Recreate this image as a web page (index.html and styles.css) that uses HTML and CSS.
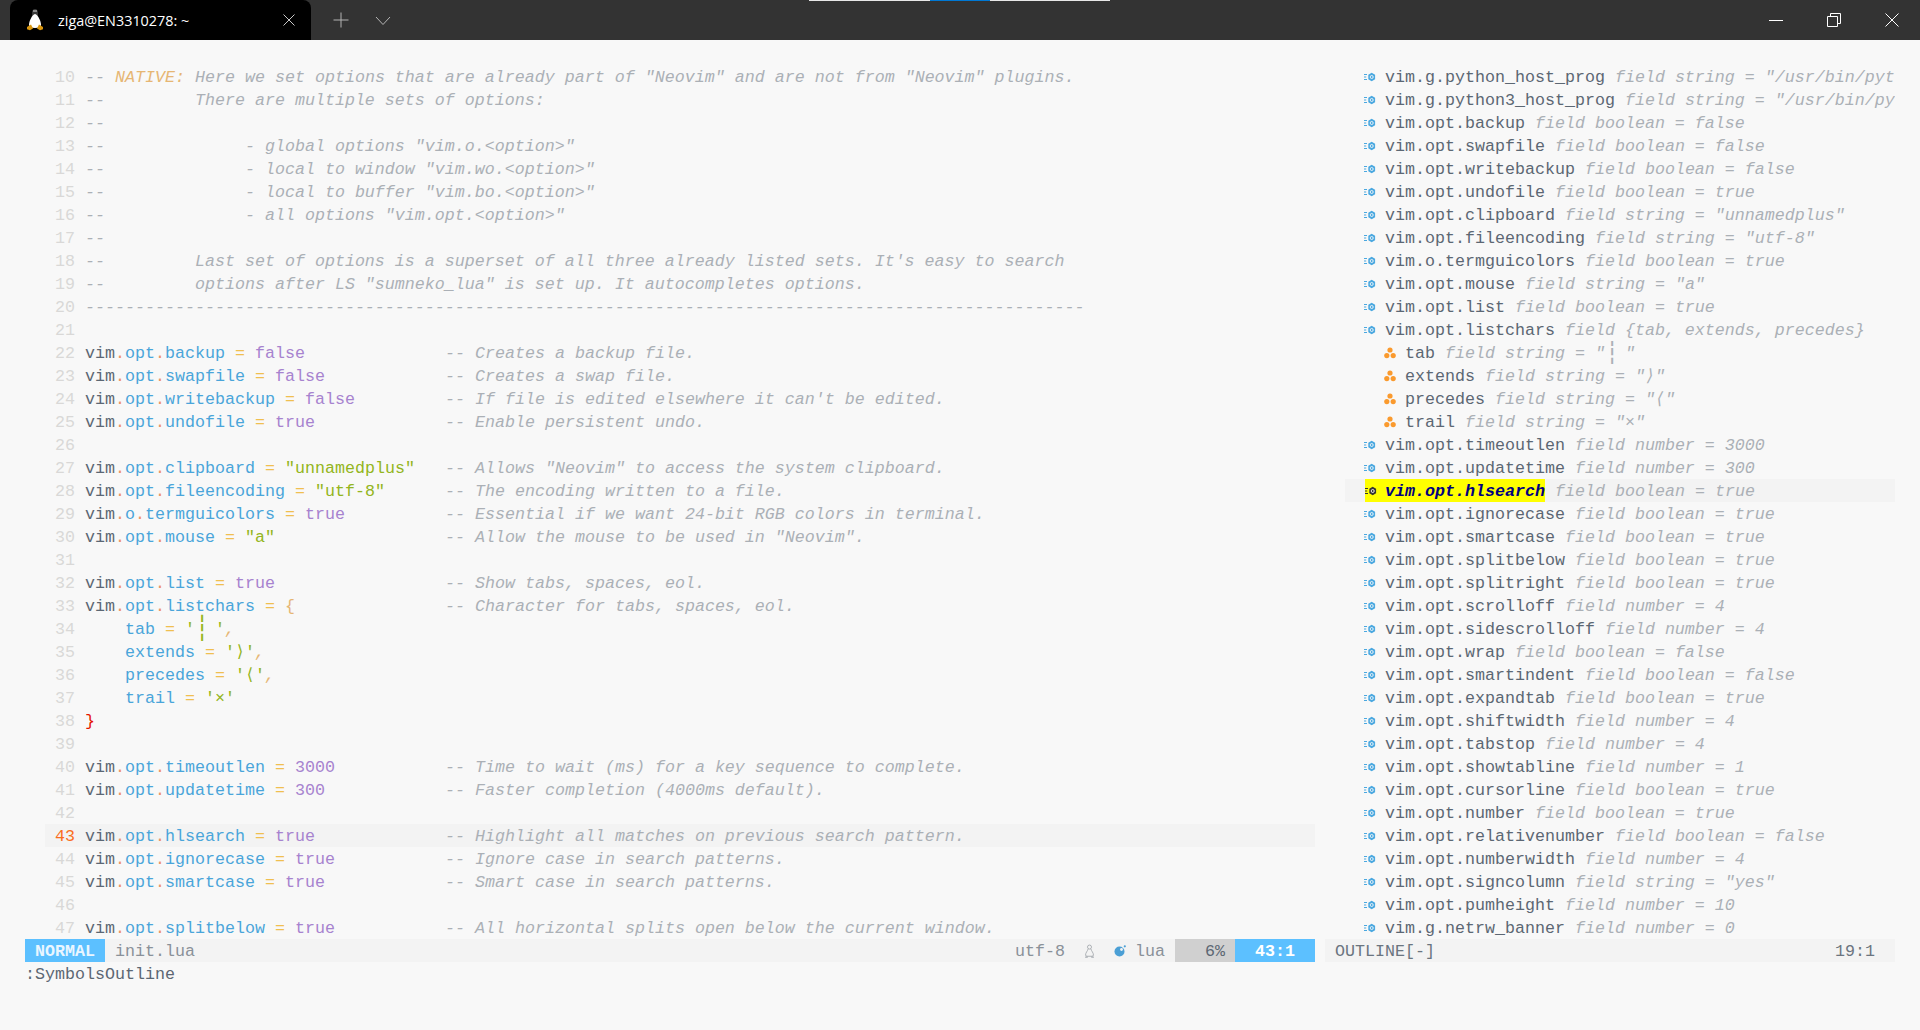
FILE: index.html
```html
<!DOCTYPE html>
<html lang="en">
<head>
<meta charset="utf-8">
<title>ziga@EN3310278: ~</title>
<link rel="stylesheet" href="styles.css">
</head>
<body>
<svg class="defs" aria-hidden="true">
  <symbol id="fld" viewBox="0 0 12 10">
    <path d="M0 2.500h3M0 5h2.200M0 7.500h3" stroke="currentColor" stroke-width="1" fill="none"/>
    <path d="M7.700 .8l3.400 2v4.400l-3.400 2-3.400-2V2.800z" fill="currentColor"/>
    <circle cx="7.700" cy="5" r="1.500" fill="none" stroke="#f8f8f8" stroke-width=".9"/>
  </symbol>
  <symbol id="mem" viewBox="0 0 12 12">
    <circle cx="6" cy="3" r="2.600" fill="#fa9a2e"/>
    <circle cx="2.800" cy="8.600" r="2.600" fill="#fa9a2e"/>
    <circle cx="9.200" cy="8.600" r="2.600" fill="#fa9a2e"/>
  </symbol>
</svg>
<div class="strip"><span class="strip-blue"></span></div>
<header class="titlebar">
  <div class="tab">
    <svg class="tux" viewBox="0 0 20 24" width="20" height="24">
      <ellipse cx="10" cy="5.500" rx="3" ry="4.500" fill="#3a3a3a"/>
      <circle cx="9" cy="3" r=".8" fill="#eee"/>
      <circle cx="11" cy="3" r=".8" fill="#eee"/>
      <path d="M10 6c-3 1-6 7-6 11 0 2 2 3 6 3s6-1 6-3c0-4-3-10-6-11z" fill="#fff"/>
      <path d="M2 19l4-2.500 2 4-3 1.800-3-1zM18 19l-4-2.500-2 4 3 1.800 3-1z" fill="#d9960f"/>
    </svg>
    <span class="tab-title">ziga@EN3310278: ~</span>
    <svg class="tab-x" viewBox="0 0 12 12" width="12" height="12"><path d="M.5.5l11 11M11.500.5l-11 11" stroke="#c8c8c8" fill="none"/></svg>
  </div>
  <svg class="new-tab" viewBox="0 0 16 16" width="16" height="16"><path d="M8 .5v15M.5 8h15" stroke="#b4b4b4" fill="none"/></svg>
  <svg class="tab-menu" viewBox="0 0 16 10" width="16" height="10"><path d="M1 1l7 7.500L15 1" stroke="#b4b4b4" fill="none"/></svg>
  <div class="win-btns">
    <svg viewBox="0 0 14 14" width="14" height="14"><path d="M0 7.500h14" stroke="#fff" fill="none"/></svg>
    <svg viewBox="0 0 14 14" width="14" height="14"><path d="M.5 3.500h10v10H.5zM3.500 3.500V.5h10v10h-3" stroke="#fff" fill="none"/></svg>
    <svg viewBox="0 0 14 14" width="14" height="14"><path d="M.5.5l13 13M13.500.5l-13 13" stroke="#fff" fill="none"/></svg>
  </div>
</header>
<main class="editor">
  <section class="win win-left">
    <div class="lines">
      <div class="line"><span class="num">10</span><span class="c">-- </span><span class="todo">NATIVE:</span><span class="c"> Here we set options that are already part of "Neovim" and are not from "Neovim" plugins.</span></div>
      <div class="line"><span class="num">11</span><span class="c">--         There are multiple sets of options:</span></div>
      <div class="line"><span class="num">12</span><span class="c">--</span></div>
      <div class="line"><span class="num">13</span><span class="c">--              - global options "vim.o.&lt;option&gt;"</span></div>
      <div class="line"><span class="num">14</span><span class="c">--              - local to window "vim.wo.&lt;option&gt;"</span></div>
      <div class="line"><span class="num">15</span><span class="c">--              - local to buffer "vim.bo.&lt;option&gt;"</span></div>
      <div class="line"><span class="num">16</span><span class="c">--              - all options "vim.opt.&lt;option&gt;"</span></div>
      <div class="line"><span class="num">17</span><span class="c">--</span></div>
      <div class="line"><span class="num">18</span><span class="c">--         Last set of options is a superset of all three already listed sets. It's easy to search</span></div>
      <div class="line"><span class="num">19</span><span class="c">--         options after LS "sumneko_lua" is set up. It autocompletes options.</span></div>
      <div class="line"><span class="num">20</span><span class="c">----------------------------------------------------------------------------------------------------</span></div>
      <div class="line"><span class="num">21</span></div>
      <div class="line"><span class="num">22</span><span class="code">vim<i>.</i><b>opt</b><i>.</i><b>backup</b> <u>=</u> <em>false</em></span><span class="c">-- Creates a backup file.</span></div>
      <div class="line"><span class="num">23</span><span class="code">vim<i>.</i><b>opt</b><i>.</i><b>swapfile</b> <u>=</u> <em>false</em></span><span class="c">-- Creates a swap file.</span></div>
      <div class="line"><span class="num">24</span><span class="code">vim<i>.</i><b>opt</b><i>.</i><b>writebackup</b> <u>=</u> <em>false</em></span><span class="c">-- If file is edited elsewhere it can't be edited.</span></div>
      <div class="line"><span class="num">25</span><span class="code">vim<i>.</i><b>opt</b><i>.</i><b>undofile</b> <u>=</u> <em>true</em></span><span class="c">-- Enable persistent undo.</span></div>
      <div class="line"><span class="num">26</span></div>
      <div class="line"><span class="num">27</span><span class="code">vim<i>.</i><b>opt</b><i>.</i><b>clipboard</b> <u>=</u> <s>"unnamedplus"</s></span><span class="c">-- Allows "Neovim" to access the system clipboard.</span></div>
      <div class="line"><span class="num">28</span><span class="code">vim<i>.</i><b>opt</b><i>.</i><b>fileencoding</b> <u>=</u> <s>"utf-8"</s></span><span class="c">-- The encoding written to a file.</span></div>
      <div class="line"><span class="num">29</span><span class="code">vim<i>.</i><b>o</b><i>.</i><b>termguicolors</b> <u>=</u> <em>true</em></span><span class="c">-- Essential if we want 24-bit RGB colors in terminal.</span></div>
      <div class="line"><span class="num">30</span><span class="code">vim<i>.</i><b>opt</b><i>.</i><b>mouse</b> <u>=</u> <s>"a"</s></span><span class="c">-- Allow the mouse to be used in "Neovim".</span></div>
      <div class="line"><span class="num">31</span></div>
      <div class="line"><span class="num">32</span><span class="code">vim<i>.</i><b>opt</b><i>.</i><b>list</b> <u>=</u> <em>true</em></span><span class="c">-- Show tabs, spaces, eol.</span></div>
      <div class="line"><span class="num">33</span><span class="code">vim<i>.</i><b>opt</b><i>.</i><b>listchars</b> <u>=</u> <i class="brace">{</i></span><span class="c">-- Character for tabs, spaces, eol.</span></div>
      <div class="line"><span class="num">34</span><span class="code">    <b>tab</b> <u>=</u> <s>'<span class="tabdash">┆</span> '</s><i class="comma">,</i></span></div>
      <div class="line"><span class="num">35</span><span class="code">    <b>extends</b> <u>=</u> <s>'⟩'</s><i class="comma">,</i></span></div>
      <div class="line"><span class="num">36</span><span class="code">    <b>precedes</b> <u>=</u> <s>'⟨'</s><i class="comma">,</i></span></div>
      <div class="line"><span class="num">37</span><span class="code">    <b>trail</b> <u>=</u> <s>'×'</s></span></div>
      <div class="line"><span class="num">38</span><span class="code"><i class="brace-end">}</i></span></div>
      <div class="line"><span class="num">39</span></div>
      <div class="line"><span class="num">40</span><span class="code">vim<i>.</i><b>opt</b><i>.</i><b>timeoutlen</b> <u>=</u> <em>3000</em></span><span class="c">-- Time to wait (ms) for a key sequence to complete.</span></div>
      <div class="line"><span class="num">41</span><span class="code">vim<i>.</i><b>opt</b><i>.</i><b>updatetime</b> <u>=</u> <em>300</em></span><span class="c">-- Faster completion (4000ms default).</span></div>
      <div class="line"><span class="num">42</span></div>
      <div class="line cursor"><span class="num cur-num">43</span><span class="code">vim<i>.</i><b>opt</b><i>.</i><b>hlsearch</b> <u>=</u> <em>true</em></span><span class="c">-- Highlight all matches on previous search pattern.</span></div>
      <div class="line"><span class="num">44</span><span class="code">vim<i>.</i><b>opt</b><i>.</i><b>ignorecase</b> <u>=</u> <em>true</em></span><span class="c">-- Ignore case in search patterns.</span></div>
      <div class="line"><span class="num">45</span><span class="code">vim<i>.</i><b>opt</b><i>.</i><b>smartcase</b> <u>=</u> <em>true</em></span><span class="c">-- Smart case in search patterns.</span></div>
      <div class="line"><span class="num">46</span></div>
      <div class="line"><span class="num">47</span><span class="code">vim<i>.</i><b>opt</b><i>.</i><b>splitbelow</b> <u>=</u> <em>true</em></span><span class="c">-- All horizontal splits open below the current window.</span></div>
    </div>
    <div class="status">
      <span class="mode">NORMAL</span>
      <span class="fname">init.lua</span>
      <span class="enc">utf-8</span>
      <svg class="st-tux" viewBox="0 0 12 16" width="11" height="14"><circle cx="6" cy="3.500" r="2.300" fill="none" stroke="#a4a8ad"/><path d="M4.500 5.500C3.800 8 1.500 10 1.500 12.500c0 1 .7 1.500 1.500 1.500h6c.8 0 1.500-.5 1.500-1.500C10.500 10 8.200 8 7.500 5.500" fill="none" stroke="#a4a8ad"/><path d="M1 15h3M8 15h3" stroke="#8a9199"/></svg>
      <svg class="st-lua" viewBox="0 0 12 12" width="12" height="12"><circle cx="5.500" cy="6.500" r="5" fill="#4b9fd5"/><circle cx="7.500" cy="4.500" r="1.400" fill="#f3f3f3"/><circle cx="10.800" cy="1.300" r="1.100" fill="#4b9fd5"/></svg>
      <span class="ft">lua</span>
      <span class="pct">6%</span>
      <span class="pos">43:1</span>
    </div>
  </section>
  <section class="win win-right">
    <div class="lines">
      <div class="oline"><svg class="ic"><use href="#fld"/></svg><span class="nm">vim.g.python_host_prog</span><span class="c">field string = "/usr/bin/pyt</span></div>
      <div class="oline"><svg class="ic"><use href="#fld"/></svg><span class="nm">vim.g.python3_host_prog</span><span class="c">field string = "/usr/bin/py</span></div>
      <div class="oline"><svg class="ic"><use href="#fld"/></svg><span class="nm">vim.opt.backup</span><span class="c">field boolean = false</span></div>
      <div class="oline"><svg class="ic"><use href="#fld"/></svg><span class="nm">vim.opt.swapfile</span><span class="c">field boolean = false</span></div>
      <div class="oline"><svg class="ic"><use href="#fld"/></svg><span class="nm">vim.opt.writebackup</span><span class="c">field boolean = false</span></div>
      <div class="oline"><svg class="ic"><use href="#fld"/></svg><span class="nm">vim.opt.undofile</span><span class="c">field boolean = true</span></div>
      <div class="oline"><svg class="ic"><use href="#fld"/></svg><span class="nm">vim.opt.clipboard</span><span class="c">field string = "unnamedplus"</span></div>
      <div class="oline"><svg class="ic"><use href="#fld"/></svg><span class="nm">vim.opt.fileencoding</span><span class="c">field string = "utf-8"</span></div>
      <div class="oline"><svg class="ic"><use href="#fld"/></svg><span class="nm">vim.o.termguicolors</span><span class="c">field boolean = true</span></div>
      <div class="oline"><svg class="ic"><use href="#fld"/></svg><span class="nm">vim.opt.mouse</span><span class="c">field string = "a"</span></div>
      <div class="oline"><svg class="ic"><use href="#fld"/></svg><span class="nm">vim.opt.list</span><span class="c">field boolean = true</span></div>
      <div class="oline"><svg class="ic"><use href="#fld"/></svg><span class="nm">vim.opt.listchars</span><span class="c">field {tab, extends, precedes}</span></div>
      <div class="oline child"><svg class="ic2"><use href="#mem"/></svg><span class="nm">tab</span><span class="c">field string = "<span class="tabdash-o">┆</span> "</span></div>
      <div class="oline child"><svg class="ic2"><use href="#mem"/></svg><span class="nm">extends</span><span class="c">field string = "⟩"</span></div>
      <div class="oline child"><svg class="ic2"><use href="#mem"/></svg><span class="nm">precedes</span><span class="c">field string = "⟨"</span></div>
      <div class="oline child"><svg class="ic2"><use href="#mem"/></svg><span class="nm">trail</span><span class="c">field string = "×"</span></div>
      <div class="oline"><svg class="ic"><use href="#fld"/></svg><span class="nm">vim.opt.timeoutlen</span><span class="c">field number = 3000</span></div>
      <div class="oline"><svg class="ic"><use href="#fld"/></svg><span class="nm">vim.opt.updatetime</span><span class="c">field number = 300</span></div>
      <div class="oline ocur"><span class="hit"><svg class="ic ic-hit"><use href="#fld"/></svg><span class="nm-hit">vim.opt.hlsearch</span></span><span class="c">field boolean = true</span></div>
      <div class="oline"><svg class="ic"><use href="#fld"/></svg><span class="nm">vim.opt.ignorecase</span><span class="c">field boolean = true</span></div>
      <div class="oline"><svg class="ic"><use href="#fld"/></svg><span class="nm">vim.opt.smartcase</span><span class="c">field boolean = true</span></div>
      <div class="oline"><svg class="ic"><use href="#fld"/></svg><span class="nm">vim.opt.splitbelow</span><span class="c">field boolean = true</span></div>
      <div class="oline"><svg class="ic"><use href="#fld"/></svg><span class="nm">vim.opt.splitright</span><span class="c">field boolean = true</span></div>
      <div class="oline"><svg class="ic"><use href="#fld"/></svg><span class="nm">vim.opt.scrolloff</span><span class="c">field number = 4</span></div>
      <div class="oline"><svg class="ic"><use href="#fld"/></svg><span class="nm">vim.opt.sidescrolloff</span><span class="c">field number = 4</span></div>
      <div class="oline"><svg class="ic"><use href="#fld"/></svg><span class="nm">vim.opt.wrap</span><span class="c">field boolean = false</span></div>
      <div class="oline"><svg class="ic"><use href="#fld"/></svg><span class="nm">vim.opt.smartindent</span><span class="c">field boolean = false</span></div>
      <div class="oline"><svg class="ic"><use href="#fld"/></svg><span class="nm">vim.opt.expandtab</span><span class="c">field boolean = true</span></div>
      <div class="oline"><svg class="ic"><use href="#fld"/></svg><span class="nm">vim.opt.shiftwidth</span><span class="c">field number = 4</span></div>
      <div class="oline"><svg class="ic"><use href="#fld"/></svg><span class="nm">vim.opt.tabstop</span><span class="c">field number = 4</span></div>
      <div class="oline"><svg class="ic"><use href="#fld"/></svg><span class="nm">vim.opt.showtabline</span><span class="c">field number = 1</span></div>
      <div class="oline"><svg class="ic"><use href="#fld"/></svg><span class="nm">vim.opt.cursorline</span><span class="c">field boolean = true</span></div>
      <div class="oline"><svg class="ic"><use href="#fld"/></svg><span class="nm">vim.opt.number</span><span class="c">field boolean = true</span></div>
      <div class="oline"><svg class="ic"><use href="#fld"/></svg><span class="nm">vim.opt.relativenumber</span><span class="c">field boolean = false</span></div>
      <div class="oline"><svg class="ic"><use href="#fld"/></svg><span class="nm">vim.opt.numberwidth</span><span class="c">field number = 4</span></div>
      <div class="oline"><svg class="ic"><use href="#fld"/></svg><span class="nm">vim.opt.signcolumn</span><span class="c">field string = "yes"</span></div>
      <div class="oline"><svg class="ic"><use href="#fld"/></svg><span class="nm">vim.opt.pumheight</span><span class="c">field number = 10</span></div>
      <div class="oline"><svg class="ic"><use href="#fld"/></svg><span class="nm">vim.g.netrw_banner</span><span class="c">field number = 0</span></div>
    </div>
    <div class="status status-out">
      <span>OUTLINE[-]</span>
      <span class="out-pos">19:1</span>
    </div>
  </section>
</main>
<div class="cmdline">:SymbolsOutline</div>
</body>
</html>
```
FILE: styles.css
```css
* { box-sizing: border-box; }
html, body { margin: 0; height: 100%; }
body {
  background: #f8f8f8;
  color: #5c6773;
  font-family: "Liberation Mono", monospace;
  font-size: 16.66px;
  line-height: 25px;
  overflow: hidden;
}
.defs { position: absolute; width: 0; height: 0; }

.strip {
  position: absolute;
  top: 0;
  left: 809px;
  width: 301px;
  height: 1px;
  background: #e8e8e8;
  display: flex;
  justify-content: center;
}
.strip-blue { width: 60px; background: #0078d4; }

.titlebar {
  height: 40px;
  background: #333;
  display: flex;
  align-items: center;
}
.tab {
  margin-left: 10px;
  width: 301px;
  height: 40px;
  background: #000;
  border-radius: 8px 8px 0 0;
  display: flex;
  align-items: center;
  padding-left: 15px;
  color: #fff;
  font-family: "Open Sans", sans-serif;
  font-size: 14.4px;
}
.tux { flex: none; }
.tab-title { margin-left: 13px; }
.tab-x { margin-left: auto; margin-right: 16px; }
.new-tab { margin-left: 22px; }
.tab-menu { margin-left: 26px; margin-top: 2px; }
.win-btns {
  margin-left: auto;
  margin-right: 21px;
  display: flex;
  gap: 44px;
  align-items: center;
}

.editor {
  display: flex;
  gap: 10px;
  padding: 25px 25px 0;
}
.win { display: flex; flex-direction: column; }
.win-left { width: 1290px; }
.win-right { width: 570px; }
.lines { height: 874px; overflow: hidden; }

.line {
  height: 23px;
  display: flex;
  white-space: pre;
  margin-left: 20px;
}
.num {
  width: 30px;
  margin-right: 10px;
  text-align: right;
  color: #d9d8d7;
}
.code { width: 360px; flex: none; }
.c { color: #abb0b6; font-style: italic; }
.todo { color: #e6b673; font-style: italic; }
.code i { color: #ed9366; font-style: normal; }
.code b { color: #4aa5da; font-weight: normal; }
.code u { color: #f0bf50; text-decoration: none; }
.code em { color: #a783cf; font-style: normal; }
.code s { color: #93b520; text-decoration: none; }
.code .brace { color: #e6b673; }
.code .comma { color: #e6b673; font-style: italic; }
.code .brace-end { color: #e51400; }
.tabdash,
.tabdash-o {
  display: inline-block;
  width: 10px;
  height: 23px;
  text-align: center;
  overflow: visible;
  font-family: "DejaVu Sans Mono", monospace;
  font-size: 24px;
  line-height: 23px;
  vertical-align: top;
}
.tabdash { font-weight: bold; }
.cursor { background: #f3f3f3; }
.cur-num { color: #fa6e1e; }

.status {
  height: 23px;
  background: #f3f3f3;
  display: flex;
  align-items: flex-start;
  color: #8a9199;
  white-space: pre;
}
.status svg { align-self: center; }
.mode {
  width: 80px;
  height: 23px;
  text-align: center;
  background: #5cc0ff;
  color: #eaf6ff;
  font-weight: bold;
}
.fname { margin-left: 10px; }
.enc { margin-left: auto; }
.st-tux { margin-left: 19px; }
.st-lua { margin-left: 19px; }
.ft { margin-left: 9px; }
.pct {
  margin-left: 10px;
  width: 60px;
  height: 23px;
  padding-right: 10px;
  text-align: right;
  background: #d0d0d0;
  color: #5c6773;
}
.pos {
  width: 80px;
  height: 23px;
  text-align: center;
  background: #5cc0ff;
  color: #fff;
  font-weight: bold;
}
.status-out { color: #6b7580; justify-content: space-between; padding: 0 20px 0 10px; }

.oline {
  height: 23px;
  white-space: pre;
  overflow: hidden;
  padding-left: 40px;
  display: flex;
  align-items: flex-start;
}
.oline.child { padding-left: 60px; }
.oline .c { margin-left: 10px; }
.ic {
  width: 12px;
  height: 10px;
  flex: none;
  align-self: center;
  color: #4aa8e0;
  margin-left: -1px;
  margin-right: 9px;
}
.ic2 {
  width: 12px;
  height: 12px;
  flex: none;
  align-self: center;
  margin-left: -1px;
  margin-right: 9px;
}
.ocur { margin-left: 20px; padding-left: 20px; background: #f3f3f3; }
.hit {
  display: flex;
  align-items: flex-start;
  background: #ffff00;
  color: #000080;
  font-weight: bold;
  font-style: italic;
  height: 23px;
  width: 180px;
}
.ic-hit { color: #333; margin-left: 0; margin-right: 8px; }
.cmdline { padding-left: 25px; height: 23px; color: #5c6773; }
```
